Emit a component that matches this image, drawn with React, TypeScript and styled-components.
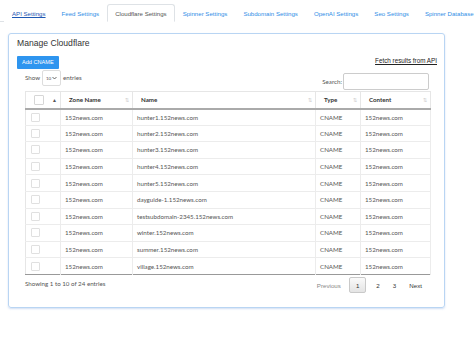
import React from "react";
import styled, { createGlobalStyle } from "styled-components";

const Global = createGlobalStyle`
  html, body { margin: 0; padding: 0; background: #fff; }
  body { font-family: Lato, "Liberation Sans", sans-serif; color: #333; }
  * { box-sizing: border-box; }
`;

const Page = styled.div`
  width: 474px;
  height: 338px;
  overflow: hidden;
`;

const TabBar = styled.div`
  display: flex;
  padding: 4px 0 0 4px;
  border-bottom: 1px solid #dee2e6;
  height: 22px;
`;

const Tab = styled.div<{ $active?: boolean; $focus?: boolean }>`
  font-family: "Liberation Sans", Arial, sans-serif;
  font-size: 6.1px;
  line-height: 17px;
  padding: 0 7px;
  height: 18px;
  color: ${(p) => (p.$active ? "#555" : p.$focus ? "#1d57b3" : "#2f8ee6")};
  text-decoration: ${(p) => (p.$focus ? "underline" : "none")};
  background: #fff;
  border: 1px solid ${(p) => (p.$active ? "#dee2e6" : "transparent")};
  border-bottom-color: ${(p) => (p.$active ? "#fff" : "transparent")};
  border-radius: 3px 3px 0 0;
  white-space: nowrap;
`;

const Card = styled.div`
  margin: 11px 0 0 8px;
  width: 437px;
  height: 275px;
  border: 1px solid #b9d5f3;
  border-radius: 3px;
  box-shadow: 0 1px 2px rgba(120, 160, 220, 0.35);
  padding: 4px 7px 0 8px;
`;

const Title = styled.div`
  font-family: "Liberation Sans", Arial, sans-serif;
  font-size: 8.6px;
  color: #333;
  line-height: 10px;
`;

const ActionRow = styled.div`
  display: flex;
  justify-content: space-between;
  align-items: flex-start;
  margin-top: 8px;
`;

const AddButton = styled.div`
  background: #2e95ef;
  color: #fff;
  font-family: "Liberation Sans", Arial, sans-serif;
  font-size: 5.6px;
  line-height: 13px;
  height: 13px;
  padding: 0 5px;
  border-radius: 1px;
`;

const FetchLink = styled.div`
  font-family: "Liberation Sans", Arial, sans-serif;
  font-size: 6.3px;
  color: #222;
  text-decoration: underline;
  margin-top: 1px;
`;

const Wrapper = styled.div`
  padding: 0 8px 0 8px;
`;

const Controls = styled.div`
  display: flex;
  justify-content: space-between;
  align-items: center;
  height: 19px;
  margin-top: 1px;
`;

const Length = styled.div`
  display: flex;
  align-items: center;
  gap: 2px;
  font-size: 6.2px;
  color: #555;
  margin-top: -4px;
`;

const SelectBox = styled.div`
  width: 19px;
  height: 16px;
  border: 1px solid #ddd;
  border-radius: 2px;
  display: flex;
  align-items: center;
  justify-content: center;
  font-size: 4.6px;
  color: #555;
  gap: 1px;
`;

const SearchBox = styled.div`
  display: flex;
  align-items: center;
  gap: 1px;
  font-size: 6.2px;
  color: #555;
  margin-top: 3px;
`;

const SearchInput = styled.div`
  width: 86px;
  height: 17px;
  border: 1px solid #ccc;
  border-radius: 2px;
`;

const Table = styled.table`
  margin-top: 2px;
  width: 405px;
  border-collapse: collapse;
  table-layout: fixed;
  font-size: 6.2px;
  color: #555;
  border: 1px solid #e6e6e6;
  border-bottom: 1.5px solid #999;
`;

const Th = styled.th<{ $w: number }>`
  width: ${(p) => p.$w}px;
  height: 17px;
  text-align: left;
  font-weight: 700;
  padding: 0 0 0 8px;
  border-right: 1px solid #e6e6e6;
  border-bottom: 2px solid #aaa;
  position: relative;
  color: #333;
`;

const SortMark = styled.span<{ $on?: boolean }>`
  position: absolute;
  right: 3px;
  top: 5px;
  font-size: 5px;
  color: ${(p) => (p.$on ? "#555" : "#ccc")};
  font-weight: 400;
`;

const Td = styled.td`
  height: 16.6px;
  padding: 0 0 0 4px;
  border-right: 1px solid #ececec;
  border-top: 1px solid #ececec;
  white-space: nowrap;
  overflow: hidden;
`;

const Check = styled.div<{ $head?: boolean }>`
  width: ${(p) => (p.$head ? 10 : 9)}px;
  height: ${(p) => (p.$head ? 10 : 9)}px;
  border: 1px solid ${(p) => (p.$head ? "#d6d6d6" : "#e0e0e0")};
  border-radius: 1px;
  margin-left: ${(p) => (p.$head ? 0 : 1)}px;
`;

const Footer = styled.div`
  display: flex;
  justify-content: space-between;
  align-items: center;
  margin-top: 2px;
`;

const Info = styled.div`
  font-size: 6.2px;
  color: #555;
  margin-top: -2px;
`;

const Pager = styled.div`
  display: flex;
  align-items: center;
  font-family: "Liberation Sans", Arial, sans-serif;
  font-size: 6.2px;
  margin-right: 1px;
`;

const PageBtn = styled.div<{ $current?: boolean; $muted?: boolean }>`
  height: 16px;
  line-height: 16px;
  padding: 0 ${(p) => (p.$current ? 6 : 5)}px;
  margin-left: ${(p) => (p.$current ? 2 : 1)}px;
  margin-right: ${(p) => (p.$current ? 3 : 0)}px;
  color: ${(p) => (p.$muted ? "#888" : "#333")};
  border: 1px solid ${(p) => (p.$current ? "#c9c9c9" : "transparent")};
  border-radius: 2px;
  background: ${(p) =>
    p.$current ? "linear-gradient(#fafafa, #e4e4e4)" : "transparent"};
`;

const names = [
  "hunter1.152news.com",
  "hunter2.152news.com",
  "hunter3.152news.com",
  "hunter4.152news.com",
  "hunter5.152news.com",
  "dayguide-1.152news.com",
  "testsubdomain-2345.152news.com",
  "winter.152news.com",
  "summer.152news.com",
  "village.152news.com",
];

const tabs = [
  "API Settings",
  "Feed Settings",
  "Cloudflare Settings",
  "Spinner Settings",
  "Subdomain Settings",
  "OpenAI Settings",
  "Seo Settings",
  "Spinner Database",
];

export default function App() {
  return (
    <Page>
      <Global />
      <TabBar>
        {tabs.map((t, i) => (
          <Tab key={t} $active={i === 2} $focus={i === 0}>
            {t}
          </Tab>
        ))}
      </TabBar>
      <Card>
        <Title>Manage Cloudflare</Title>
        <ActionRow>
          <AddButton>Add CNAME</AddButton>
          <FetchLink>Fetch results from API</FetchLink>
        </ActionRow>
        <Wrapper>
          <Controls>
            <Length>
              Show
              <SelectBox>
                10
                <svg width="5" height="4" viewBox="0 0 5 4">
                  <path d="M0.5 1 L2.5 3 L4.5 1" stroke="#444" strokeWidth="0.8" fill="none" />
                </svg>
              </SelectBox>
              entries
            </Length>
            <SearchBox>
              Search:
              <SearchInput />
            </SearchBox>
          </Controls>
          <Table>
            <thead>
              <tr>
                <Th $w={35}>
                  <Check $head />
                  <SortMark $on>▲</SortMark>
                </Th>
                <Th $w={72}>
                  Zone Name<SortMark>⇅</SortMark>
                </Th>
                <Th $w={183}>
                  Name<SortMark>⇅</SortMark>
                </Th>
                <Th $w={45}>
                  Type<SortMark>⇅</SortMark>
                </Th>
                <Th $w={70}>
                  Content<SortMark>⇅</SortMark>
                </Th>
              </tr>
            </thead>
            <tbody>
              {names.map((n) => (
                <tr key={n}>
                  <Td>
                    <Check />
                  </Td>
                  <Td>152news.com</Td>
                  <Td>{n}</Td>
                  <Td>CNAME</Td>
                  <Td>152news.com</Td>
                </tr>
              ))}
            </tbody>
          </Table>
          <Footer>
            <Info>Showing 1 to 10 of 24 entries</Info>
            <Pager>
              <PageBtn $muted>Previous</PageBtn>
              <PageBtn $current>1</PageBtn>
              <PageBtn>2</PageBtn>
              <PageBtn>3</PageBtn>
              <PageBtn>Next</PageBtn>
            </Pager>
          </Footer>
        </Wrapper>
      </Card>
    </Page>
  );
}
